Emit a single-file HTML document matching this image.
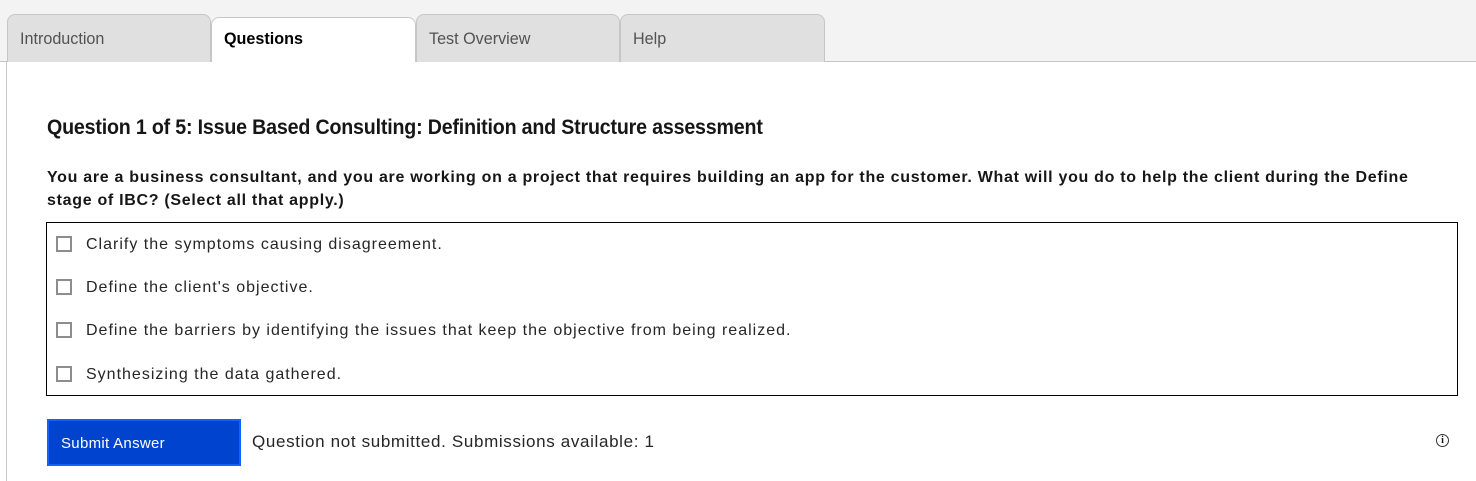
<!DOCTYPE html>
<html><head><style>
*{margin:0;padding:0;box-sizing:border-box}
body{width:1476px;height:481px;background:#fff;font-family:"Liberation Sans",sans-serif;color:#161616;position:relative;overflow:hidden}
.top{position:absolute;left:0;top:0;width:1476px;height:62px;background:#f3f3f3;border-bottom:1px solid #c6c6c6}
.tab{position:absolute;top:14px;height:48px;background:#e0e0e0;border:1px solid #c6c6c6;border-bottom:none;border-radius:8px 8px 0 0;font-size:17px;color:#525252;padding:14px 0 0 12px}
.tab span{display:inline-block;transform:scaleX(.95);transform-origin:left}
.tab.act{top:17px;height:45px;background:#fff;color:#000;font-weight:bold;padding-top:11px;z-index:2}
.side{position:absolute;left:6px;top:61px;width:1px;height:420px;background:#c6c6c6}
h1{position:absolute;left:47px;top:116px;font-size:21px;font-weight:bold;white-space:nowrap;transform:scaleX(.935);transform-origin:left;letter-spacing:-.2px}
.q{position:absolute;left:47px;top:166px;width:1410px;font-size:16px;font-weight:bold;line-height:23px;letter-spacing:.7px}
.box{position:absolute;left:46px;top:222px;width:1412px;height:174px;border:1px solid #000}
.opt{position:absolute;left:9px;font-size:16px;color:#262626;white-space:nowrap;letter-spacing:1px}
.opt i{position:absolute;left:0;top:1px;width:16px;height:16px;border:2px solid #8d8d8d}
.opt span{position:absolute;left:30px;top:1px}
.btn{position:absolute;left:47px;top:419px;width:194px;height:47px;background:#0043ce;border:2px solid #0f62fe;color:#fff;font-size:15px;padding:14px 0 0 12px;letter-spacing:.3px}
.st{position:absolute;left:252px;top:432px;font-size:17px;color:#262626;letter-spacing:.65px}
.info{position:absolute;left:1436px;top:434px;width:13px;height:13px;border:1px solid #333;border-radius:50%;font-size:10px;font-weight:bold;text-align:center;line-height:11px;font-family:"Liberation Serif",serif}
</style></head><body>
<div class="top"></div>
<div class="tab" style="left:7px;width:204px"><span>Introduction</span></div>
<div class="tab act" style="left:211px;width:205px"><span>Questions</span></div>
<div class="tab" style="left:416px;width:204px"><span>Test Overview</span></div>
<div class="tab" style="left:620px;width:205px"><span>Help</span></div>
<div class="side"></div>
<h1>Question 1 of 5: Issue Based Consulting: Definition and Structure assessment</h1>
<div class="q">You are a business consultant, and you are working on a project that requires building an app for the customer. What will you do to help the client during the Define stage of IBC? (Select all that apply.)</div>
<div class="box">
<div class="opt" style="top:12px"><i></i><span>Clarify the symptoms causing disagreement.</span></div>
<div class="opt" style="top:55px"><i></i><span>Define the client's objective.</span></div>
<div class="opt" style="top:98px"><i></i><span>Define the barriers by identifying the issues that keep the objective from being realized.</span></div>
<div class="opt" style="top:142px"><i></i><span>Synthesizing the data gathered.</span></div>
</div>
<div class="btn">Submit Answer</div>
<div class="st">Question not submitted. Submissions available: 1</div>
<div class="info">i</div>
</body></html>
